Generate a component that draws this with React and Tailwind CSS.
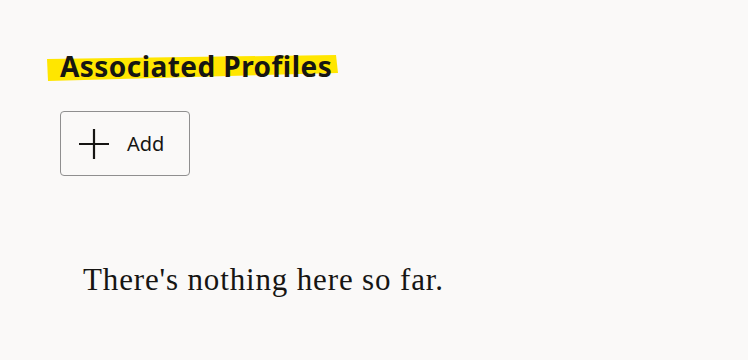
export default function App() {
  return (
    <div className="w-[748px] h-[360px] bg-[#faf9f8] pl-[60px] pt-[48px]">
      {/* Heading with marker highlight */}
      <div className="relative inline-block">
        <svg
          className="absolute left-[-15px] top-[6px]"
          width="295"
          height="28"
          viewBox="0 0 295 28"
        >
          <path d="M2 5 L291 1 L293 19 L3 27 Z" fill="#ffe600" />
        </svg>
        <h2 className="relative text-[28px] leading-[36px] font-bold text-[#161513] font-['Noto_Sans',sans-serif] tracking-[0.45px]">
          Associated Profiles
        </h2>
      </div>

      <div className="mt-[27px]">
        <button
          type="button"
          className="flex items-center w-[130px] h-[65px] border border-[#8f8f8f] rounded-[4px] pl-[18px] gap-[18px] text-[#161513]"
        >
          <svg width="30" height="30" viewBox="0 0 30 30">
            <path d="M15 0 V30 M0 15 H30" stroke="#161513" strokeWidth="2.2" />
          </svg>
          <span className="text-[20px] font-['Noto_Sans',sans-serif]">Add</span>
        </button>
      </div>

      <p className="mt-[84px] ml-[23px] text-[31px] leading-[40px] tracking-[0.85px] text-[#161513] font-['Liberation_Serif',serif]">
        There's nothing here so far.
      </p>
    </div>
  );
}
